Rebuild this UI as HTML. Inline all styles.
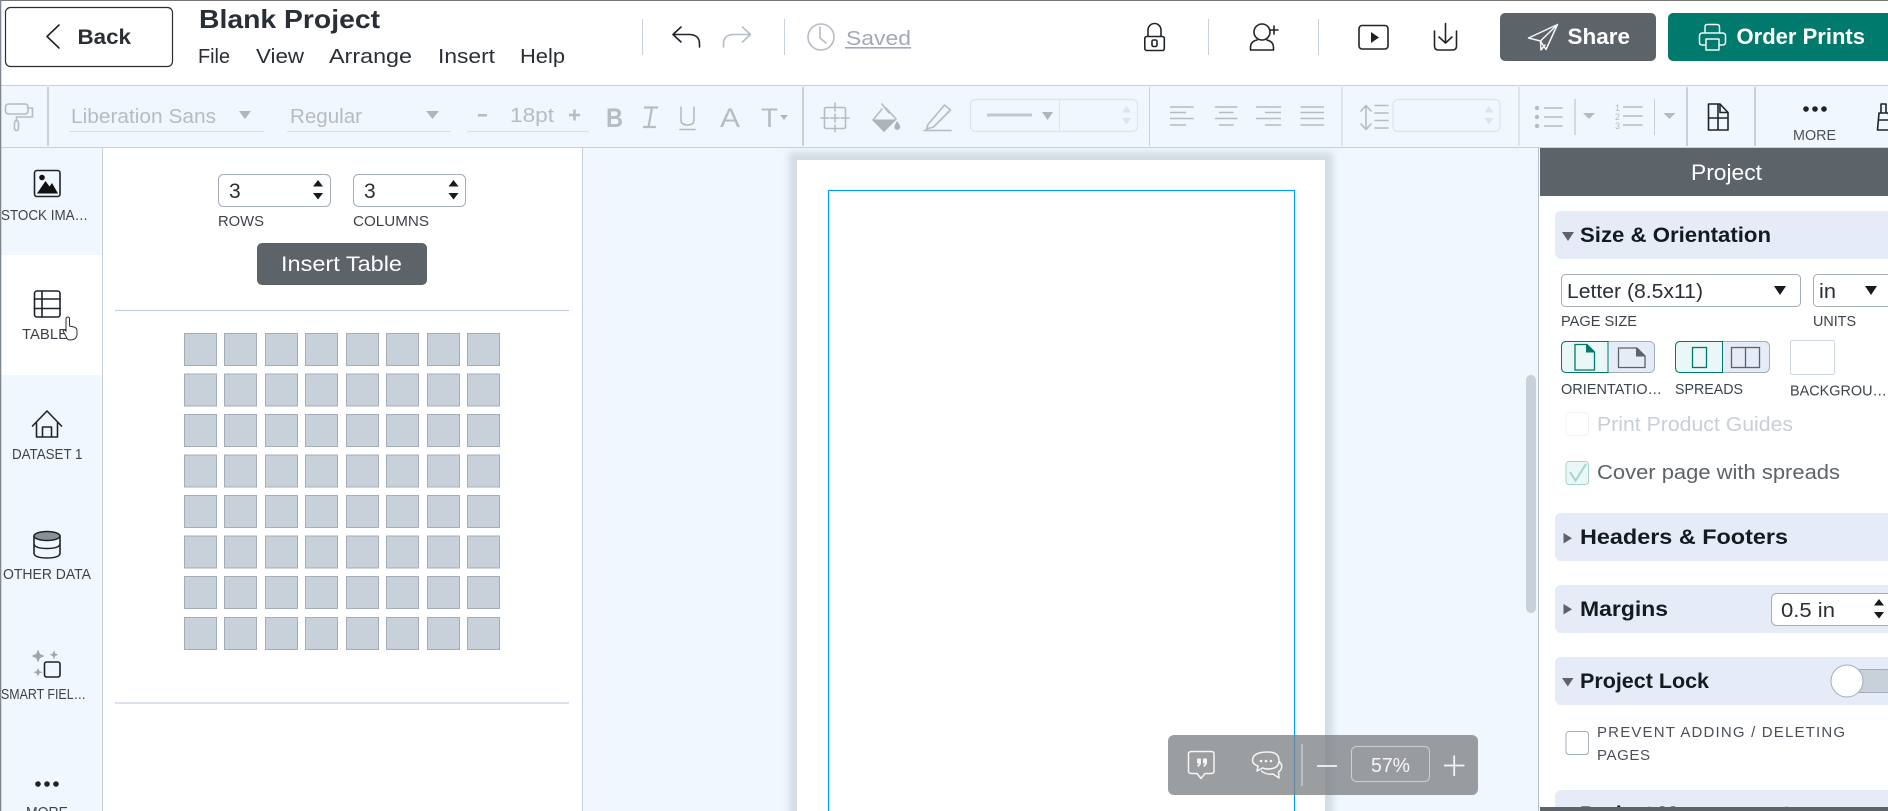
<!DOCTYPE html>
<html lang="en">
<head>
<meta charset="utf-8">
<title>Blank Project</title>
<style>
html,body{margin:0;padding:0;width:1888px;height:811px;overflow:hidden;background:#fff}
svg{display:block;position:absolute;left:0;top:0}
text{font-family:"Liberation Sans",Arial,sans-serif;white-space:pre}
.lb{font-size:15px;fill:#3d434a}
.rl{font-size:15px;fill:#3d434a}
.hd{font-size:21px;font-weight:700;fill:#151a21}
.dis{fill:#b6bcc5}
.ic{fill:none;stroke:#1f2429;stroke-width:1.6;stroke-linecap:round;stroke-linejoin:round}
.dc{fill:none;stroke:#b6bcc5;stroke-width:1.6;stroke-linecap:round;stroke-linejoin:round}
.ln{fill:none;stroke:#b6bcc5;stroke-width:1.6}
.sep{stroke:#c8d0da;stroke-width:1}
.sp2{stroke:#c8d0da;stroke-width:2}
.wh{fill:none;stroke:#f4f5f6;stroke-width:1.5;stroke-linecap:round;stroke-linejoin:round}
</style>
</head>
<body>
<svg width="1888" height="811" viewBox="0 0 1888 811" xmlns="http://www.w3.org/2000/svg">
<defs>
<filter id="s" x="-10%" y="-10%" width="120%" height="120%"><feGaussianBlur stdDeviation="3.5"/></filter>
<clipPath id="toolclip"><rect x="0" y="85" width="1888" height="62"/></clipPath>
<g id="sq"><rect x=".5" y=".5" width="32" height="32" fill="#c8d0da" stroke="#a3acb8"/></g>
<g id="row">
<use href="#sq" x="184"/><use href="#sq" x="224"/><use href="#sq" x="265"/><use href="#sq" x="305"/><use href="#sq" x="346"/><use href="#sq" x="386"/><use href="#sq" x="427"/><use href="#sq" x="467"/>
</g>
</defs>

<!-- canvas -->
<rect x="0" y="0" width="1888" height="811" fill="#f0f7ff"/>
<rect x="789" y="152" width="544" height="680" fill="#bcc5d0" opacity=".55" filter="url(#s)"/>
<rect x="797" y="160" width="528" height="660" fill="#fff"/>
<rect x="828.5" y="190.5" width="466" height="640" fill="none" stroke="#0099ff" stroke-width="1.1"/>
<rect x="1526" y="375" width="10" height="238" rx="5" fill="#c8d0da"/>

<!-- header -->
<rect x="0" y="0" width="1888" height="85" fill="#fff"/>
<rect x="0" y="0" width="1888" height="1" fill="#777"/>
<rect x="5.5" y="7.5" width="167" height="59" rx="5" fill="#fff" stroke="#2a2f36" stroke-width="1.2"/>
<path class="ic" d="M59 25L47 36.5L59 48" stroke-width="1.4"/>
<text x="77.5" y="44" font-size="21" font-weight="700" fill="#2a2f36" textLength="53.5" lengthAdjust="spacingAndGlyphs">Back</text>
<text x="199" y="28" font-size="26" font-weight="700" fill="#2a2f36" textLength="181" lengthAdjust="spacingAndGlyphs">Blank Project</text>
<g font-size="20" fill="#2a2f36">
<text x="198" y="63" textLength="32" lengthAdjust="spacingAndGlyphs">File</text>
<text x="256" y="63" textLength="48" lengthAdjust="spacingAndGlyphs">View</text>
<text x="329" y="63" textLength="83" lengthAdjust="spacingAndGlyphs">Arrange</text>
<text x="438" y="63" textLength="57" lengthAdjust="spacingAndGlyphs">Insert</text>
<text x="520" y="63" textLength="45" lengthAdjust="spacingAndGlyphs">Help</text>
</g>
<line class="sep" x1="642.5" y1="19" x2="642.5" y2="55"/>
<line class="sep" x1="784.5" y1="19" x2="784.5" y2="55"/>
<path class="ic" d="M681 27L673 34.5L681 42M673 34.5H690Q699.5 35 699.5 44V47" stroke-width="1.5"/>
<path class="dc" d="M742.5 27L750.5 34.5L742.5 42M750.5 34.5H733Q723.5 35 723.5 44V47" stroke-width="1.3"/>
<circle cx="821" cy="37" r="13" class="dc"/>
<path class="dc" d="M820 27V38L826 43" stroke-width="1.3"/>
<text x="846" y="45" font-size="20" fill="#a3a9b4" textLength="65" lengthAdjust="spacingAndGlyphs">Saved</text>
<rect x="845" y="47" width="66" height="1.6" fill="#a3a9b4"/>
<rect x="1144.8" y="36.5" width="19.5" height="14" rx="2" class="ic"/>
<path class="ic" d="M1148 36V30a6.5 6.5 0 0 1 13 0V36"/>
<rect x="1152" y="40" width="5" height="6.5" rx="1.5" class="ic"/>
<line class="sep" x1="1208.5" y1="19" x2="1208.5" y2="55"/>
<circle cx="1262" cy="32" r="8" class="ic"/>
<path class="ic" d="M1250.5 50V47.5Q1250.5 41.5 1257 40M1267 40Q1273.5 41.5 1273.5 47.5V50H1250.5"/>
<path class="ic" d="M1274 26V34M1270 30H1278" stroke-width="1.2"/>
<line class="sep" x1="1318.5" y1="19" x2="1318.5" y2="55"/>
<rect x="1359" y="25.5" width="29" height="23.5" rx="3" class="ic"/>
<path d="M1371 32V43L1379 37.5Z" fill="#1f2429"/>
<path class="ic" d="M1434.5 31V46Q1434.5 50 1438.5 50H1452.5Q1456.5 50 1456.5 46V31M1445.5 23.5V43M1439 37L1445.5 43L1452 37"/>
<rect x="1500" y="13" width="156" height="48" rx="5" fill="#5c6369"/>
<path class="wh" d="M1528.5 38L1557.5 24.5L1546 49.5L1540.5 41ZM1557.5 24.5L1540.5 41L1541 50L1545 45" stroke-width="1.3"/>
<text x="1567.5" y="44" font-size="22" font-weight="700" fill="#fff" textLength="62.5" lengthAdjust="spacingAndGlyphs">Share</text>
<rect x="1668" y="13" width="230" height="48" rx="5" fill="#017a6e"/>
<path class="wh" d="M1705 33V27Q1705 24.500 1707 24.500H1717Q1719.500 24.500 1719.500 27V33M1706 45H1702Q1699.500 45 1699.500 42V36Q1699.500 33 1702.500 33H1722.500Q1725.500 33 1725.500 36V42Q1725.500 45 1722.500 45H1719M1706 39H1719V50H1706Z"/>
<text x="1736.5" y="44" font-size="22" font-weight="700" fill="#fff" textLength="128.500" lengthAdjust="spacingAndGlyphs">Order Prints</text>

<!-- toolbar -->
<rect x="0" y="85" width="1888" height="63" fill="#f0f7ff"/>
<rect x="0" y="85" width="1888" height="1" fill="#c8d0da"/>
<rect x="0" y="147" width="1888" height="1" fill="#c8d0da"/>
<g clip-path="url(#toolclip)">
<rect x="5.500" y="104" width="22.500" height="10" rx="3" class="dc"/>
<path class="dc" d="M28 108H32.500V117H16.500V121"/>
<rect x="14.500" y="120.500" width="4" height="10" rx="2" class="dc"/>
<line class="sp2" x1="48" y1="87" x2="48" y2="146"/>
<text x="71" y="123" font-size="20" class="dis" textLength="145" lengthAdjust="spacingAndGlyphs">Liberation Sans</text>
<path d="M239 111H251L245 119Z" fill="#b0b6be"/>
<line x1="69" y1="131.500" x2="264" y2="131.500" stroke="#d9e1ec"/>
<text x="290" y="123" font-size="20" class="dis" textLength="72" lengthAdjust="spacingAndGlyphs">Regular</text>
<path d="M426 111H439L432.500 119Z" fill="#b0b6be"/>
<line x1="287" y1="131.500" x2="451" y2="131.500" stroke="#d9e1ec"/>
<rect x="478" y="114" width="9" height="2.500" fill="#b6bcc5"/>
<text x="510" y="122" font-size="20" class="dis" textLength="44" lengthAdjust="spacingAndGlyphs">18pt</text>
<path d="M569 115H580M574.500 109.500V120.500" stroke="#b6bcc5" stroke-width="2.500"/>
<line x1="467" y1="131.500" x2="589" y2="131.500" stroke="#d9e1ec"/>
<text x="606" y="127" font-size="27" font-weight="700" class="dis" textLength="17" lengthAdjust="spacingAndGlyphs">B</text>
<path d="M644 107.500H658M652 107.500L648.500 127M643 127H656" fill="none" stroke="#b6bcc5" stroke-width="2.200"/>
<path class="dc" d="M681 107V120Q681 125 687.500 125Q694 125 694 120V107M680 129.500H695"/>
<text x="720" y="127" font-size="27" class="dis" textLength="20" lengthAdjust="spacingAndGlyphs">A</text>
<text x="761" y="127" font-size="27" class="dis" textLength="17" lengthAdjust="spacingAndGlyphs">T</text>
<path d="M780 115H788L784 120Z" fill="#b0b6be"/>
<line class="sp2" x1="803" y1="87" x2="803" y2="146"/>
<rect x="824.500" y="107.500" width="21" height="21" rx="1.500" class="dc"/>
<path class="dc" d="M835 103V111M835 125V131.500M821 118H829M841 118H849M835 114V122M831 118H839" stroke-width="1.300"/>
<path class="dc" d="M882 104L889 113M882 109L873 120L884 131L896 119L886 108"/>
<path d="M873 119.500H896L884 131.500Z" fill="#adb3ba"/>
<path d="M897 121Q901 126 900 128A3 3 0 0 1 894.500 128Q894 126 897 121Z" fill="#adb3ba"/>
<path class="dc" d="M928 124.500L944.500 105L950.500 110L933.500 127L926.500 129ZM924 130.500H951"/>
<rect x="970.500" y="99.500" width="167" height="32" rx="5" fill="none" stroke="#dde4ee" stroke-width="1.200"/>
<line x1="1059.500" y1="100" x2="1059.500" y2="131" stroke="#dde4ee"/>
<rect x="987" y="113.500" width="45" height="3" fill="#c1c7cf"/>
<path d="M1042 112H1053L1047.500 120Z" fill="#b0b6be"/>
<path d="M1126.500 106L1131 112.500H1122ZM1126.500 124.500L1131 118H1122Z" fill="#dde4ee"/>
<line class="sep" x1="1149.500" y1="87" x2="1149.500" y2="146"/>
<path class="ln" d="M1170 107H1193.500M1170 112.500H1186M1170 118.500H1193.500M1170 125H1186"/>
<path class="ln" d="M1215 107H1237.500M1219 112.500H1233.500M1215 118.500H1237.500M1219 125H1233.500"/>
<path class="ln" d="M1256 107H1281M1265 112.500H1281M1256 118.500H1281M1265 125H1281"/>
<path class="ln" d="M1300.500 107H1324M1300.500 112.500H1324M1300.500 118.500H1324M1300.500 125H1324"/>
<line class="sep" x1="1342" y1="87" x2="1342" y2="146"/>
<path class="dc" d="M1366 106V129M1361 111L1366 105.500L1371 111M1361 124L1366 129.500L1371 124M1375 105.500H1388M1375 113H1388M1375 120.500H1388M1375 128H1388" stroke-width="1.400"/>
<rect x="1393" y="99.500" width="107" height="32" rx="5" fill="none" stroke="#dde4ee" stroke-width="1.200"/>
<path d="M1489 106L1493.500 112.500H1484.500ZM1489 124.500L1493.500 118H1484.500Z" fill="#dde4ee"/>
<line class="sep" x1="1519" y1="87" x2="1519" y2="146"/>
<g fill="#b6bcc5"><circle cx="1537" cy="108" r="2.200"/><circle cx="1537" cy="117" r="2.200"/><circle cx="1537" cy="126" r="2.200"/></g>
<path class="ln" d="M1544 108H1562.500M1544 117H1562.500M1544 126H1562.500"/>
<line x1="1575" y1="99" x2="1575" y2="135" stroke="#c8d0da" stroke-width="1.500"/>
<path d="M1583 113H1595L1589 119Z" fill="#b6bcc5"/>
<g font-size="9" class="dis"><text x="1615" y="111">1</text><text x="1615" y="120">2</text><text x="1615" y="129">3</text></g>
<path class="ln" d="M1623 107H1642.500M1623 116H1642.500M1623 125H1642.500"/>
<line class="sep" x1="1654.500" y1="99" x2="1654.500" y2="135"/>
<path d="M1663.500 113H1675.500L1669.500 119Z" fill="#b6bcc5"/>
<line class="sp2" x1="1687" y1="87" x2="1687" y2="146"/>
<path class="ic" d="M1708.500 104H1720L1728 112.500V130H1708.500ZM1720 104V112.500H1728M1718 104V130M1708.500 118H1728" stroke-width="1.500"/>
<line class="sp2" x1="1755" y1="87" x2="1755" y2="146"/>
<g fill="#1f2429"><circle cx="1806" cy="109" r="2.800"/><circle cx="1815" cy="109" r="2.800"/><circle cx="1824" cy="109" r="2.800"/></g>
<text x="1793" y="140" font-size="15" fill="#4a5058" textLength="43" lengthAdjust="spacingAndGlyphs">MORE</text>
<path class="ic" d="M1881 104H1886V113H1888.500L1890 130H1877.500L1879 113H1881ZM1879 113H1889M1878.500 120H1889.500" stroke-width="1.500"/>
</g>

<!-- left rail -->
<rect x="0" y="148" width="102" height="663" fill="#f0f7ff"/>
<rect x="1" y="255" width="101" height="120" fill="#fff"/>
<rect x="0" y="0" width="1.300" height="811" fill="#7f8790"/>
<line x1="102.500" y1="148" x2="102.500" y2="811" stroke="#c8d0da"/>
<rect x="34.500" y="170.500" width="25.500" height="26" rx="2.500" class="ic" stroke-width="1.500"/>
<path d="M37 193.500L45.500 181L49.500 186.500L52 183L58 193.500Z" fill="#111"/><circle cx="42" cy="177.500" r="2.800" fill="#111"/>
<text x="1" y="220" class="rl" textLength="87" lengthAdjust="spacingAndGlyphs">STOCK IMA…</text>
<rect x="34.500" y="291" width="25.500" height="26" rx="2.500" class="ic" stroke-width="1.500"/>
<path class="ic" d="M34.500 299H60M34.500 308.500H60M42 291V317" stroke-width="1.300"/>
<text x="22" y="339" class="rl" textLength="46" lengthAdjust="spacingAndGlyphs">TABLE</text>
<path d="M66 318Q68 316 69.500 318V326L71.500 326.500L74 327Q77 328 77 331V335Q76 340 70.500 340Q67 340 66 336.500L63 331Q64 329 66 331Z" fill="#fff" stroke="#2a2f36" stroke-width="1"/>
<path class="ic" d="M32.500 426L47 411L61.500 426M36.500 423V437H57.500V423M42.500 437V427H51.500V437" stroke-width="1.400"/>
<text x="12" y="459" class="rl" textLength="70.500" lengthAdjust="spacingAndGlyphs">DATASET 1</text>
<ellipse cx="47" cy="536" rx="13" ry="4.500" fill="#8d9196" stroke="#1f2429" stroke-width="1.500"/>
<path class="ic" d="M34 536V553.500Q35 558 47 558Q59 558 60 553.500V536M34 544Q35 548.500 47 548.500Q59 548.500 60 544" stroke-width="1.500"/>
<text x="3" y="579" class="rl" textLength="88" lengthAdjust="spacingAndGlyphs">OTHER DATA</text>
<g fill="#a0a6ad">
<path d="M38 649.500L40 654L44.500 656L40 658L38 662.500L36 658L31.500 656L36 654Z"/>
<path d="M54 650L55.200 653.500L58.500 654.700L55.200 656L54 659.500L52.800 656L49.500 654.700L52.800 653.500Z"/>
<path d="M38 668L39.300 671L42.500 672.300L39.300 673.500L38 676.500L36.700 673.500L33.500 672.300L36.700 671Z"/>
</g>
<rect x="44.500" y="662" width="15.500" height="15" rx="2" class="ic" stroke-width="1.500"/>
<text x="1" y="699" class="rl" textLength="85" lengthAdjust="spacingAndGlyphs">SMART FIEL…</text>
<g fill="#1f2429"><circle cx="38" cy="784" r="2.800"/><circle cx="47" cy="784" r="2.800"/><circle cx="56" cy="784" r="2.800"/></g>
<text x="26" y="817" class="rl" textLength="42" lengthAdjust="spacingAndGlyphs">MORE</text>

<!-- left panel -->
<rect x="103" y="148" width="480" height="663" fill="#fff"/>
<line x1="582.500" y1="148" x2="582.500" y2="811" stroke="#c8d0da"/>
<rect x="218.500" y="174.500" width="112" height="32" rx="5" fill="#fff" stroke="#a3acb8"/>
<text x="229" y="198" font-size="21" fill="#2a2f36">3</text>
<path d="M318 180L323 186.500H313ZM318 199.500L323 193H313Z" fill="#151a21"/>
<rect x="353.500" y="174.500" width="112" height="32" rx="5" fill="#fff" stroke="#a3acb8"/>
<text x="364" y="198" font-size="21" fill="#2a2f36">3</text>
<path d="M453.500 180L458.500 186.500H448.500ZM453.500 199.500L458.500 193H448.500Z" fill="#151a21"/>
<text x="218" y="226" class="lb" textLength="46" lengthAdjust="spacingAndGlyphs">ROWS</text>
<text x="353" y="226" class="lb" textLength="76" lengthAdjust="spacingAndGlyphs">COLUMNS</text>
<rect x="257" y="243" width="170" height="42" rx="5" fill="#5c6369"/>
<text x="281" y="271" font-size="21" fill="#fff" textLength="121" lengthAdjust="spacingAndGlyphs">Insert Table</text>
<line x1="115" y1="310.500" x2="569" y2="310.500" stroke="#c6d1e0" stroke-width="1.200"/>
<use href="#row" y="333"/><use href="#row" y="373.500"/><use href="#row" y="414"/><use href="#row" y="454.500"/>
<use href="#row" y="495"/><use href="#row" y="535.500"/><use href="#row" y="576"/><use href="#row" y="617"/>
<line x1="115" y1="703" x2="569" y2="703" stroke="#c6d1e0" stroke-width="1.200"/>

<!-- right panel -->
<rect x="1538" y="148" width="350" height="663" fill="#fff"/>
<line x1="1538.500" y1="148" x2="1538.500" y2="811" stroke="#b6bec9"/>
<rect x="1540" y="148" width="348" height="48" fill="#5c6369"/>
<text x="1691" y="180" font-size="22" fill="#fff" textLength="71" lengthAdjust="spacingAndGlyphs">Project</text>

<rect x="1555" y="211" width="345" height="48" rx="6" fill="#e5ecf7"/>
<path d="M1562 232H1574L1568 241Z" fill="#5c6369"/>
<text x="1580" y="242" class="hd" textLength="191" lengthAdjust="spacingAndGlyphs">Size &amp; Orientation</text>
<rect x="1561.500" y="274.500" width="239" height="32" rx="4" fill="#fff" stroke="#a3acb8"/>
<text x="1567" y="298" font-size="20" fill="#2a2f36" textLength="136" lengthAdjust="spacingAndGlyphs">Letter (8.5x11)</text>
<path d="M1774 286H1786L1780 295Z" fill="#151a21"/>
<rect x="1813.500" y="274.500" width="90" height="32" rx="4" fill="#fff" stroke="#a3acb8"/>
<text x="1819" y="298" font-size="20" fill="#2a2f36" textLength="17" lengthAdjust="spacingAndGlyphs">in</text>
<path d="M1865 286H1877L1871 295Z" fill="#151a21"/>
<text x="1561" y="326" class="lb" textLength="76" lengthAdjust="spacingAndGlyphs">PAGE SIZE</text>
<text x="1813" y="326" class="lb" textLength="43" lengthAdjust="spacingAndGlyphs">UNITS</text>

<rect x="1561.500" y="341.500" width="93" height="31" rx="5" fill="#e5ecf7" stroke="#a3acb8"/>
<path d="M1608 341.500H1566.500Q1561.500 341.500 1561.500 346.500V367.500Q1561.500 372.500 1566.500 372.500H1608Z" fill="#e9f7f6" stroke="#017a6e"/>
<path d="M1575 344.500H1587L1594.500 352V370H1575Z" fill="none" stroke="#017a6e" stroke-width="1.300"/>
<path d="M1586 344L1595 352.500H1586Z" fill="#017a6e"/>
<path d="M1618.500 348H1637L1645 356V367.500H1618.500Z" fill="none" stroke="#5c6369" stroke-width="1.300"/>
<path d="M1636 347.500L1645 356.500H1636Z" fill="#5c6369"/>
<rect x="1675.500" y="341.500" width="94" height="31" rx="5" fill="#e5ecf7" stroke="#a3acb8"/>
<path d="M1722.500 341.500H1680.500Q1675.500 341.500 1675.500 346.500V367.500Q1675.500 372.500 1680.500 372.500H1722.500Z" fill="#e9f7f6" stroke="#017a6e"/>
<rect x="1692.500" y="347.500" width="14" height="20" fill="none" stroke="#017a6e" stroke-width="1.300"/>
<rect x="1731.500" y="347.500" width="28" height="20" fill="none" stroke="#5c6369" stroke-width="1.300"/>
<line x1="1745.500" y1="347.500" x2="1745.500" y2="367.500" stroke="#5c6369" stroke-width="1.300"/>
<rect x="1790.500" y="340.500" width="44" height="34" rx="2" fill="#fff" stroke="#cdd5e0"/>
<text x="1561" y="394" class="lb" textLength="101" lengthAdjust="spacingAndGlyphs">ORIENTATIO…</text>
<text x="1675" y="394" class="lb" textLength="68" lengthAdjust="spacingAndGlyphs">SPREADS</text>
<text x="1790" y="395.500" class="lb" textLength="97" lengthAdjust="spacingAndGlyphs">BACKGROU…</text>

<rect x="1566" y="412.500" width="22.500" height="23" rx="3" fill="#fff" stroke="#eef1f5"/>
<text x="1597" y="431" font-size="20" fill="#c8cfd8" textLength="196" lengthAdjust="spacingAndGlyphs">Print Product Guides</text>
<rect x="1566" y="461.500" width="22.500" height="23" rx="3" fill="#e9f7f6" stroke="#a7d3cd"/>
<path d="M1570 472L1575.500 480.500L1586 464" fill="none" stroke="#a7d3cd" stroke-width="2"/>
<text x="1597" y="479" font-size="20" fill="#5c6369" textLength="243" lengthAdjust="spacingAndGlyphs">Cover page with spreads</text>

<rect x="1555" y="513" width="345" height="48" rx="6" fill="#e5ecf7"/>
<path d="M1563.500 533V543.500L1572 538.200Z" fill="#5c6369"/>
<text x="1580" y="544" class="hd" textLength="208" lengthAdjust="spacingAndGlyphs">Headers &amp; Footers</text>

<rect x="1555" y="585" width="345" height="48" rx="6" fill="#e5ecf7"/>
<path d="M1563.500 604V614.500L1572 609.200Z" fill="#5c6369"/>
<text x="1580" y="616" class="hd" textLength="88" lengthAdjust="spacingAndGlyphs">Margins</text>
<rect x="1771.500" y="593.500" width="125" height="32" rx="5" fill="#fff" stroke="#a3acb8"/>
<text x="1781" y="617" font-size="20" fill="#2a2f36" textLength="54" lengthAdjust="spacingAndGlyphs">0.5 in</text>
<path d="M1879 599L1884 605.500H1874ZM1879 618.500L1884 612H1874Z" fill="#151a21"/>

<rect x="1555" y="657" width="345" height="48" rx="6" fill="#e5ecf7"/>
<path d="M1562 678H1573.500L1567.800 686.500Z" fill="#5c6369"/>
<text x="1580" y="688" class="hd" textLength="129" lengthAdjust="spacingAndGlyphs">Project Lock</text>
<rect x="1838" y="669.500" width="60" height="23" rx="11.500" fill="#c8d0da" stroke="#a3acb8"/>
<circle cx="1847" cy="681" r="16" fill="#fff" stroke="#a3acb8"/>

<rect x="1566" y="731.500" width="22.500" height="23" rx="3" fill="#fff" stroke="#a3acb8"/>
<text x="1597" y="737" font-size="15" fill="#4a5058" textLength="248" lengthAdjust="spacing">PREVENT ADDING / DELETING</text>
<text x="1597" y="760" font-size="15" fill="#4a5058" textLength="53" lengthAdjust="spacing">PAGES</text>

<rect x="1555" y="790" width="345" height="30" rx="6" fill="#e5ecf7"/>
<text x="1580" y="821" class="hd" textLength="210" lengthAdjust="spacingAndGlyphs">Project Management</text>
<rect x="1540" y="807" width="348" height="4" fill="#5c6369"/>

<!-- zoom bar -->
<rect x="1168" y="735" width="310" height="60" rx="6" fill="#7c8084" fill-opacity=".76"/>
<path class="wh" d="M1191.500 751.500H1211.500Q1214 751.500 1214 754V771Q1214 773.500 1211.500 773.500H1205L1201 778.500L1197 773.500H1191.500Q1188.500 773.500 1188.500 771V754Q1188.500 751.500 1191.500 751.500Z" stroke-width="1.300"/>
<path d="M1197 758.500h4v3.500q0 3.500-3 5l-.8-1.200q1.500-1 1.700-2.300h-1.900ZM1203 758.500h4v3.500q0 3.500-3 5l-.8-1.200q1.500-1 1.700-2.300h-1.900Z" fill="#f4f5f6"/>
<path class="wh" d="M1268 752Q1279 752 1279 760.500Q1279 769 1268 769Q1265 769 1262.500 768L1257 771L1258 766Q1252.500 764 1252.500 760.500Q1252.500 752 1268 752Z" stroke-width="1.300"/>
<path class="wh" d="M1279.500 762Q1283 765 1281 769.500Q1279.500 771.500 1278.500 772L1279 778L1273 774Q1266 775 1261.500 771" stroke-width="1.300"/>
<g fill="#f4f5f6"><circle cx="1261" cy="761" r="1.300"/><circle cx="1266" cy="761" r="1.300"/><circle cx="1271" cy="761" r="1.300"/></g>
<line x1="1302" y1="744" x2="1302" y2="786" stroke="#fff" stroke-opacity=".45" stroke-width="1.500"/>
<path d="M1317 766H1337" stroke="#f4f5f6" stroke-width="1.800"/>
<rect x="1351.500" y="746.500" width="78" height="35" rx="5" fill="none" stroke="#fff" stroke-opacity=".5"/>
<text x="1371" y="772" font-size="20" fill="#f4f5f6" textLength="39" lengthAdjust="spacingAndGlyphs">57%</text>
<path d="M1444 765.500H1464.500M1454.200 755.500V776" stroke="#f4f5f6" stroke-width="1.800"/>
</svg>
</body>
</html>
